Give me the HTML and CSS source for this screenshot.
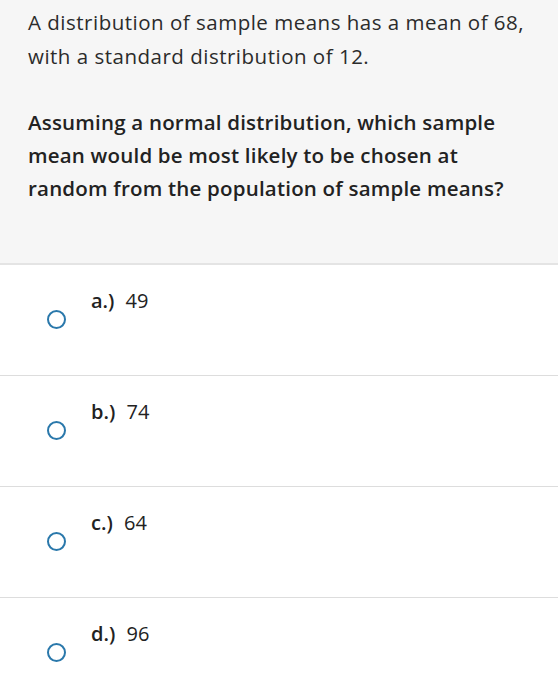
FILE: index.html
```html
<!DOCTYPE html>
<html>
<head>
<meta charset="utf-8">
<link rel="stylesheet" href="styles.css">
</head>
<body>
<div class="question">
  <p class="stem">A distribution of sample means has a mean of 68, with a standard distribution of 12.</p>
  <p class="prompt">Assuming a normal distribution, which sample mean would be most likely to be chosen at random from the population of sample means?</p>
</div>
<ul class="options">
  <li class="option"><span class="radio"></span><span class="label"><b>a.)</b> 49</span></li>
  <li class="option"><span class="radio"></span><span class="label"><b>b.)</b> 74</span></li>
  <li class="option"><span class="radio"></span><span class="label"><b>c.)</b> 64</span></li>
  <li class="option"><span class="radio"></span><span class="label"><b>d.)</b> 96</span></li>
</ul>
</body>
</html>
```
FILE: styles.css
```css
html, body {
  margin: 0;
  padding: 0;
  background: #ffffff;
}
body {
  font-family: "Open Sans", Arial, sans-serif;
  color: #2b2b2b;
  width: 558px;
}
.question {
  background: #f6f6f6;
  border-bottom: 2px solid #e4e4e4;
  padding: 5px 28px 0 28px;
  height: 258px;
}
.question p {
  margin: 0;
  font-size: 20.5px;
  line-height: 34px;
  letter-spacing: 0.5px;
}
.stem {
  font-weight: 400;
  margin-bottom: 33px !important;
}
.prompt {
  font-weight: 600;
  color: #222;
  letter-spacing: 0.2px !important;
  line-height: 33px !important;
}
.options {
  list-style: none;
  margin: 0;
  padding: 0;
}
.option {
  height: 111px;
  border-bottom: 1px solid #dddddd;
  display: flex;
  align-items: flex-start;
  padding-left: 47px;
  box-sizing: border-box;
}
.radio {
  width: 19px;
  height: 19px;
  box-sizing: border-box;
  border: 2px solid #2a78ab;
  border-radius: 50%;
  margin-top: 45px;
  flex: none;
}
.label {
  margin-left: 25px;
  margin-top: 24px;
  font-size: 20px;
  line-height: 24px;
  color: #222;
}
.label b {
  font-weight: 600;
  margin-right: 6px;
}
```
